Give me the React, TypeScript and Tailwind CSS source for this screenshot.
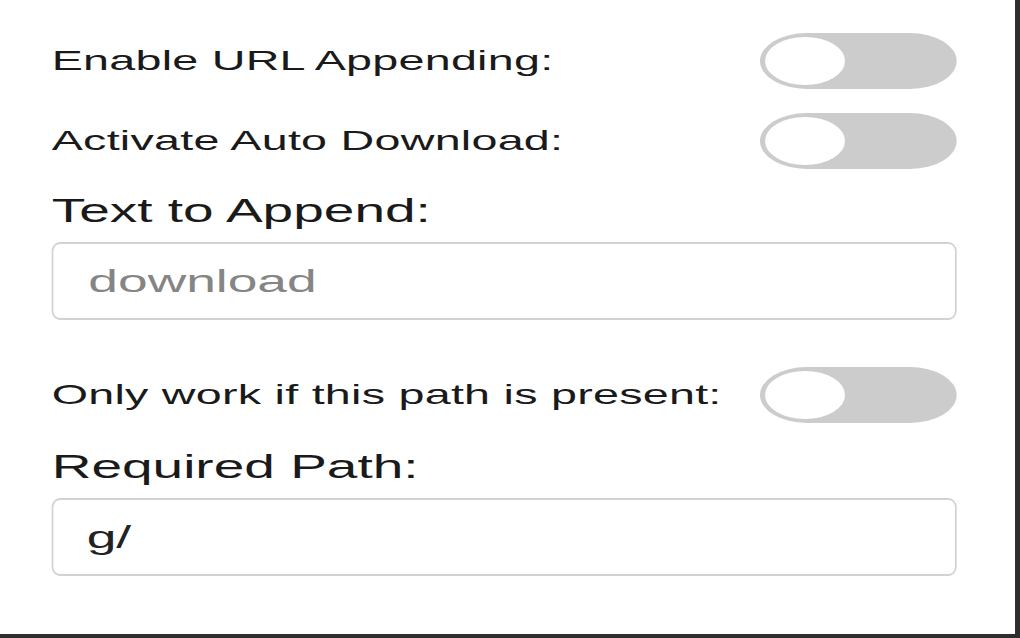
import React, { useState } from 'react';

// the reference popup is stretched 5:3 horizontally, so the panel is laid out
// at its natural 612px width and widened with one scale on the wrapper
function Toggle({ on, onChange }: { on: boolean; onChange: (v: boolean) => void }) {
  return (
    <button
      type="button"
      onClick={() => onChange(!on)}
      className={`relative h-[56px] w-[118px] shrink-0 rounded-full transition-colors ${on ? 'bg-[#2196f3]' : 'bg-[#cccccc]'}`}
    >
      <span
        className={`absolute top-[4px] left-[3px] h-12 w-12 rounded-full bg-white transition-transform ${on ? 'translate-x-[64px]' : ''}`}
      />
    </button>
  );
}

function ToggleRow({ label, on, onChange }: { label: string; on: boolean; onChange: (v: boolean) => void }) {
  return (
    <div className="flex items-center justify-between">
      <span className="text-[28px] leading-none tracking-[0.15px] text-[#1a1a1a]">{label}</span>
      <Toggle on={on} onChange={onChange} />
    </div>
  );
}

export default function App() {
  const [appendUrl, setAppendUrl] = useState(false);
  const [autoDownload, setAutoDownload] = useState(false);
  const [requirePath, setRequirePath] = useState(false);
  const [appendText, setAppendText] = useState('');
  const [path, setPath] = useState('g/');

  return (
    <div className="h-[638px] w-[1020px] overflow-hidden bg-white">
      <div className="h-[638px] w-[612px] origin-top-left scale-x-[1.6667] border-r-[3px] border-b-4 border-[#2e2e2e] bg-white pt-[33px] pr-[35px] pl-[31px] font-['Liberation_Sans',Arial,sans-serif]">
        <ToggleRow label="Enable URL Appending:" on={appendUrl} onChange={setAppendUrl} />
        <div className="mt-6">
          <ToggleRow label="Activate Auto Download:" on={autoDownload} onChange={setAutoDownload} />
        </div>

        <label className="mt-[25px] block text-[33px] leading-none text-[#1a1a1a]">Text to Append:</label>
        <input
          value={appendText}
          onChange={e => setAppendText(e.target.value)}
          placeholder="download"
          className="mt-[15px] block h-[78px] w-full rounded-[5px/9px] border-x border-y-2 border-[#d2d2d2] bg-white pl-[21px] text-[32px] text-[#222] outline-none placeholder:text-[#858585]"
        />

        <div className="mt-[47px]">
          <ToggleRow label="Only work if this path is present:" on={requirePath} onChange={setRequirePath} />
        </div>

        <label className="mt-[27px] block text-[33px] leading-none text-[#1a1a1a]">Required Path:</label>
        <input
          value={path}
          onChange={e => setPath(e.target.value)}
          className="mt-[15px] block h-[78px] w-full rounded-[5px/9px] border-x border-y-2 border-[#d2d2d2] bg-white pl-[20px] text-[32px] text-[#222] outline-none"
        />
      </div>
    </div>
  );
}
